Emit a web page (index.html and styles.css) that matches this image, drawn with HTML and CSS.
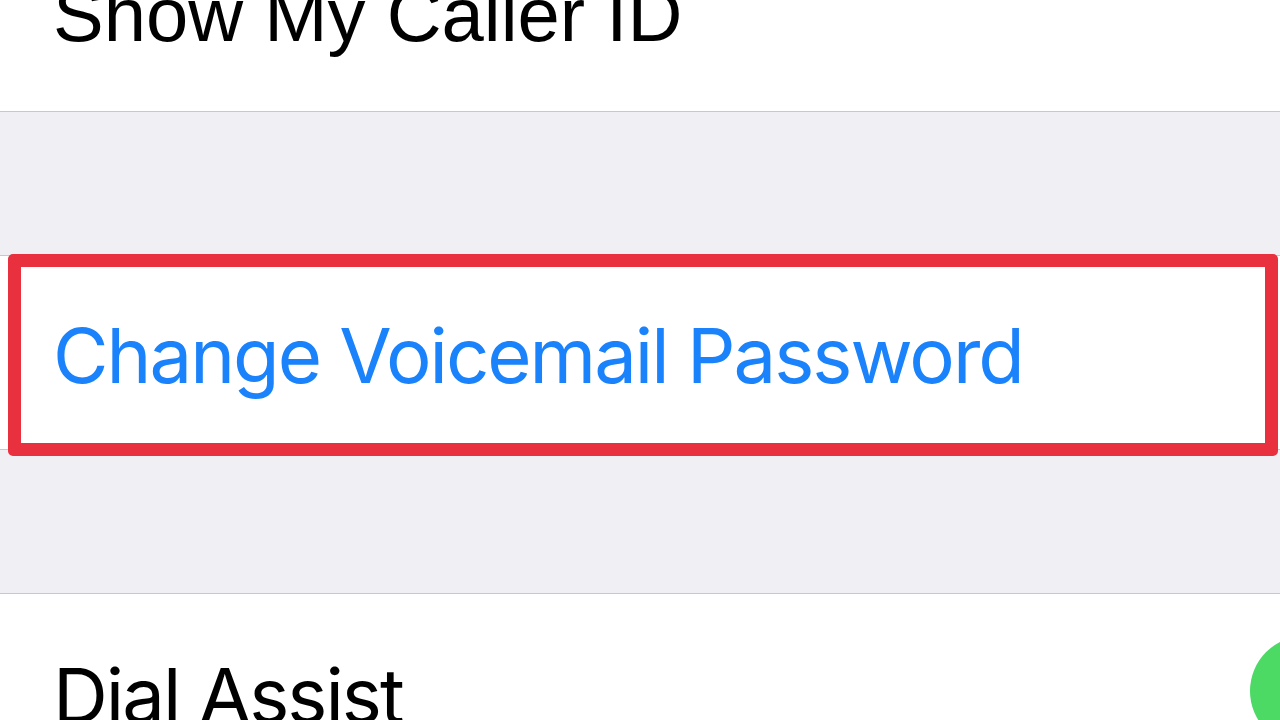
FILE: index.html
```html
<!DOCTYPE html>
<html lang="en">
<head>
    <meta charset="UTF-8">
    <meta name="viewport" content="width=device-width, initial-scale=1.0">
    <title>Phone Settings</title>
    <link rel="stylesheet" href="styles.css">
</head>
<body>

    <!-- Caller ID row -->
    <div class="row top">
        <span class="label plain">Show My Caller ID</span>
    </div>

    <div class="spacer"></div>

    <!-- Voicemail password row (highlighted) -->
    <div class="row mid">
        <span class="label link">Change Voicemail Password</span>
        <div class="highlight"></div>
    </div>

    <div class="spacer"></div>

    <!-- Dial assist row -->
    <div class="row bottom">
        <span class="label">Dial Assist</span>
        <div class="toggle"></div>
    </div>

</body>
</html>
```

FILE: styles.css
```css
body {
    margin: 0;
    padding: 0;
    background-color: #efeff4;
    font-family: "Inter", "Roboto", sans-serif;
    overflow: hidden;
    height: 720px;
}

.row {
    background-color: #ffffff;
    display: flex;
    align-items: center;
    padding-left: 53px;
    position: relative;
}

.label {
    font-size: 76px;
    letter-spacing: -2px;
    color: #000;
    white-space: nowrap;
}

/* Show My Caller ID - cut at top */
.top {
    height: 111px;
    align-items: flex-start;
    border-bottom: 1px solid #c8c7cc;
    overflow: hidden;
}

.plain {
    font-family: "Liberation Sans", Arial, sans-serif;
    font-size: 76px;
    letter-spacing: 0;
    margin-top: -30px;
    line-height: 90px;
}

.spacer {
    height: 143px;
}

.mid {
    height: 193px;
    border-top: 1px solid #c8c7cc;
    border-bottom: 1px solid #c8c7cc;
}

.link {
    color: #1a82fa;
    margin-top: 4px;
}

/* red box drawn over the row */
.highlight {
    position: absolute;
    left: 8px;
    right: 2px;
    top: -2px;
    bottom: -7px;
    border: 13px solid #e8303f;
    border-radius: 5px;
}

.bottom {
    height: 140px;
    border-top: 1px solid #c8c7cc;
    align-items: flex-start;
}

.bottom .label {
    margin-top: 55px;
}

.toggle {
    position: absolute;
    left: 1250px;
    top: 42px;
    width: 110px;
    height: 110px;
    border-radius: 55px;
    background-color: #4cd964;
}
```
